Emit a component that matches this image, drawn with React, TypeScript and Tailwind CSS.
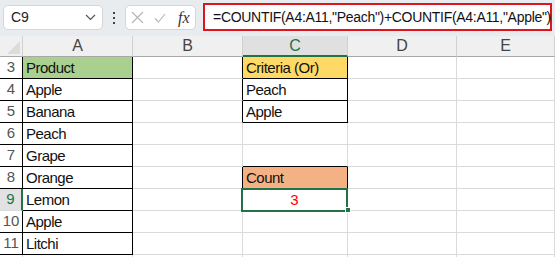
import type { ReactNode } from "react";

type CellProps = {
  children?: ReactNode;
  bg?: string;
  right?: string;
  bottom?: string;
  center?: boolean;
  extra?: string;
};

const GRID = "border-[#dadada]";
const font = { fontFamily: '"Liberation Sans", Arial, sans-serif' };

function Cell({ children, bg = "bg-white", right = GRID, bottom = GRID, center, extra = "" }: CellProps) {
  return (
    <div
      className={`h-[22px] border-r border-b ${right} ${bottom} ${bg} flex items-center ${
        center ? "justify-center" : "pl-[3px]"
      } pt-[1px] text-[15px] tracking-[-0.5px] text-[#111] overflow-hidden whitespace-nowrap ${extra}`}
    >
      {children}
    </div>
  );
}

function RowHead({ n, active, border = "border-black" }: { n?: number; active?: boolean; border?: string }) {
  return (
    <div
      className={`h-[22px] border-b border-[#dadada] flex items-center justify-center text-[15px] ${
        active ? "bg-[#e2e2e2] border-r-2 border-r-[#217346] text-[#217346]" : `bg-white border-r ${border} text-[#555]`
      }`}
    >
      {n}
    </div>
  );
}

const rows = [
  { n: 3, a: "Product", c: "Criteria (Or)" },
  { n: 4, a: "Apple", c: "Peach" },
  { n: 5, a: "Banana", c: "Apple" },
  { n: 6, a: "Peach", c: "" },
  { n: 7, a: "Grape", c: "" },
  { n: 8, a: "Orange", c: "Count" },
  { n: 9, a: "Lemon", c: "3" },
  { n: 10, a: "Apple", c: "" },
  { n: 11, a: "Litchi", c: "" },
];

export default function App() {
  return (
    <div className="w-[555px] h-[257px] overflow-hidden bg-white select-none" style={font}>
      {/* formula bar */}
      <div className="h-[36px] bg-[#e9ecef] flex items-start pt-[5px] pl-[3px]">
        <div className="w-[100px] h-[25px] bg-white border border-[#d6d6d6] rounded-[5px] flex items-center justify-between pl-[7px] pr-[6px]">
          <span className="text-[14px] text-[#222]">C9</span>
          <svg width="11" height="7" viewBox="0 0 11 7" fill="none" stroke="#555" strokeWidth="1.2">
            <path d="M1 1l4.5 4.5L10 1" />
          </svg>
        </div>
        <div className="w-[22px] h-[25px] flex flex-col items-center justify-center gap-[3px]">
          <span className="w-[2px] h-[2px] bg-[#444]" />
          <span className="w-[2px] h-[2px] bg-[#444]" />
          <span className="w-[2px] h-[2px] bg-[#444]" />
        </div>
        <div className="w-[71px] h-[25px] bg-white border border-[#d6d6d6] rounded-[5px] flex items-center pl-[5px] gap-[10px]">
          <svg width="13" height="13" viewBox="0 0 13 13" fill="none" stroke="#b5b5b5" strokeWidth="1.1">
            <path d="M1 1l11 11M12 1L1 12" />
          </svg>
          <svg width="12" height="10" viewBox="0 0 12 10" fill="none" stroke="#b5b5b5" strokeWidth="1.1">
            <path d="M1 5.5L4.5 9L11 1" />
          </svg>
          <span className="text-[16px] italic text-[#333] ml-[2px]" style={{ fontFamily: '"Liberation Serif", serif' }}>
            fx
          </span>
        </div>
        <div className="ml-[7px] -mt-[2px] w-[349px] h-[28px] bg-white border-2 border-[#e0141e] flex items-center pl-[8px] text-[14px] tracking-[-0.3px] text-[#111] whitespace-nowrap">
          =COUNTIF(A4:A11,"Peach")+COUNTIF(A4:A11,"Apple")
        </div>
      </div>

      {/* sheet */}
      <div className="grid grid-cols-[23px_110px_110px_105px_109px_98px]">
        {/* column headers */}
        <div className="h-[21px] bg-[#f0f0f0] border-r border-b border-[#d0d0d0] border-b-[#a8a8a8] relative">
          <svg className="absolute right-[2px] bottom-[2px]" width="13" height="13" viewBox="0 0 13 13">
            <path d="M13 0V13H0Z" fill="#dcdcdc" />
          </svg>
        </div>
        {["A", "B"].map((l) => (
          <div
            key={l}
            className="h-[21px] bg-[#f0f0f0] border-r border-[#d0d0d0] border-b border-b-[#a8a8a8] flex items-center justify-center text-[16px] text-[#444]"
          >
            {l}
          </div>
        ))}
        <div className="h-[21px] bg-[#e0e0e0] border-r border-[#d0d0d0] border-b-2 border-b-[#217346] flex items-center justify-center text-[16px] text-[#217346] pt-[1px]">
          C
        </div>
        {["D", "E"].map((l) => (
          <div
            key={l}
            className="h-[21px] bg-[#f0f0f0] border-r border-[#d0d0d0] border-b border-b-[#a8a8a8] flex items-center justify-center text-[16px] text-[#444]"
          >
            {l}
          </div>
        ))}

        {rows.map((r) => {
          const cBordered = r.n <= 5 || r.n === 8;
          const bRight = cBordered ? "border-r-black" : r.n === 9 ? "border-r-transparent" : GRID;
          const cBottom = r.n <= 5 || r.n === 7 || r.n === 8 ? "border-b-black" : GRID;
          const cBg = r.n === 3 ? "bg-[#ffd966]" : r.n === 8 ? "bg-[#f4b183]" : "bg-white";
          return [
            <RowHead key={`h${r.n}`} n={r.n} active={r.n === 9} />,
            <Cell
              key={`a${r.n}`}
              bg={r.n === 3 ? "bg-[#a9d08e]" : "bg-white"}
              right="border-r-black"
              bottom="border-b-black"
            >
              {r.a}
            </Cell>,
            <Cell key={`b${r.n}`} right={bRight} />,
            r.n === 9 ? (
              <div key="c9" className="h-[22px] relative bg-white border-b border-r border-[#dadada]">
                <div className="absolute -left-[2px] -top-[1px] w-[107px] h-[24px] border-2 border-[#217346] flex items-center justify-center text-[15px] text-[#ff0000]">
                  3
                </div>
                <div className="absolute -right-[4px] -bottom-[3px] w-[6px] h-[6px] bg-[#217346] border border-white" />
              </div>
            ) : (
              <Cell
                key={`c${r.n}`}
                bg={cBg}
                right={cBordered ? "border-r-black" : GRID}
                bottom={cBottom}
              >
                {r.c}
              </Cell>
            ),
            <Cell key={`d${r.n}`} />,
            <Cell key={`e${r.n}`} />,
          ];
        })}
        <RowHead border="border-[#dadada]" />
        <Cell />
        <Cell />
        <Cell />
        <Cell />
        <Cell />
      </div>
    </div>
  );
}
